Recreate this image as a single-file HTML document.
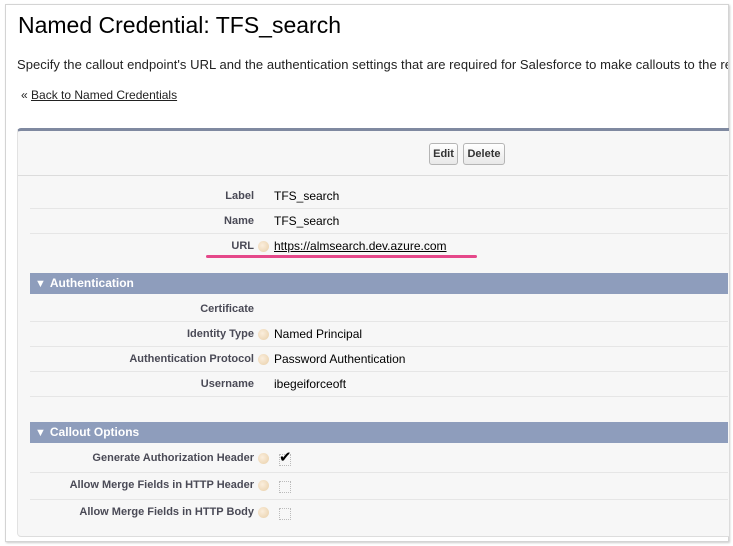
<!DOCTYPE html><html><head><style>
body{margin:0;width:733px;height:546px;background:#fff;font-family:"Liberation Sans",Arial,sans-serif;position:relative;overflow:hidden}
.a{position:absolute;white-space:nowrap}
.frame{position:absolute;left:5px;top:4px;width:722px;height:536px;border:1px solid #d4d4d4;box-shadow:1px 1px 2px #ccc;overflow:hidden}
.lbl{position:absolute;right:479px;font-size:11px;font-weight:bold;color:#4a4a56}
.val{position:absolute;left:274px;font-size:12px;color:#000}
.hr{position:absolute;left:30px;width:698px;height:1px;background:#e6e6e6}
.ic{position:absolute;left:258px;width:11px;height:11px;border-radius:50%;background:radial-gradient(circle at 40% 40%,#fbeedd,#e8cfa8)}
.sec{position:absolute;left:30px;width:698px;height:21px;background:#8e9dbc;color:#fff;font-weight:bold;font-size:12px;line-height:21px}
.btn{position:absolute;top:143px;height:20px;border:1px solid #b5b5b5;border-radius:3px;background:linear-gradient(#fff,#e8e8e8);font-size:11px;font-weight:bold;color:#333;line-height:20px;text-align:center}
.cb{position:absolute;left:279px;width:10px;height:10px;border:1px dotted #bbb}
</style></head><body>
<div class="frame"></div>
<div class="a" style="left:18px;top:12px;font-size:23px;color:#000">Named Credential: TFS_search</div>
<div class="a" style="left:17px;top:57px;width:711px;overflow:hidden;font-size:13px;letter-spacing:0.05px;color:#222">Specify the callout endpoint's URL and the authentication settings that are required for Salesforce to make callouts to the remote system.</div>
<div class="a" style="left:21px;top:88px;font-size:12px;color:#222">« <span style="text-decoration:underline">Back to Named Credentials</span></div>
<div class="a" style="left:17px;top:128px;width:711px;height:405px;background:#f7f7f7;border-top:3px solid #7f89a0;border-bottom:1px solid #ddd;border-left:1px solid #e2e2e2;border-radius:4px 0 0 4px"></div>
<div class="a" style="left:18px;top:175px;width:710px;height:1px;background:#dcdcdc"></div>
<div class="btn" style="left:429px;width:27px">Edit</div>
<div class="btn" style="left:463px;width:40px">Delete</div>
<div class="lbl" style="top:190px">Label</div><div class="val" style="top:189px">TFS_search</div>
<div class="hr" style="top:208px"></div>
<div class="lbl" style="top:215px">Name</div><div class="val" style="top:214px">TFS_search</div>
<div class="hr" style="top:233px"></div>
<div class="lbl" style="top:240px">URL</div><div class="ic" style="top:241px"></div><div class="val" style="top:239px;text-decoration:underline">https://almsearch.dev.azure.com</div>
<div class="a" style="left:206px;top:255px;width:271px;height:3px;background:#e5488a;border-radius:2px"></div>
<div class="sec" style="top:273px"><span style="font-size:11px;margin:0 4px 0 5px">▼</span>Authentication</div>
<div class="lbl" style="top:303px">Certificate</div>
<div class="hr" style="top:321px"></div>
<div class="lbl" style="top:328px">Identity Type</div><div class="ic" style="top:329px"></div><div class="val" style="top:327px">Named Principal</div>
<div class="hr" style="top:346px"></div>
<div class="lbl" style="top:353px">Authentication Protocol</div><div class="ic" style="top:354px"></div><div class="val" style="top:352px">Password Authentication</div>
<div class="hr" style="top:371px"></div>
<div class="lbl" style="top:378px">Username</div><div class="val" style="top:377px">ibegeiforceoft</div>
<div class="hr" style="top:396px"></div>
<div class="sec" style="top:422px"><span style="font-size:11px;margin:0 4px 0 5px">▼</span>Callout Options</div>
<div class="lbl" style="top:452px">Generate Authorization Header</div><div class="ic" style="top:453px"></div><div class="cb" style="top:454px"></div><div class="a" style="left:279px;top:448px;font-size:15px;color:#000">✔</div>
<div class="hr" style="top:472px"></div>
<div class="lbl" style="top:479px">Allow Merge Fields in HTTP Header</div><div class="ic" style="top:480px"></div><div class="cb" style="top:481px"></div>
<div class="hr" style="top:499px"></div>
<div class="lbl" style="top:506px">Allow Merge Fields in HTTP Body</div><div class="ic" style="top:507px"></div><div class="cb" style="top:508px"></div>
</body></html>
